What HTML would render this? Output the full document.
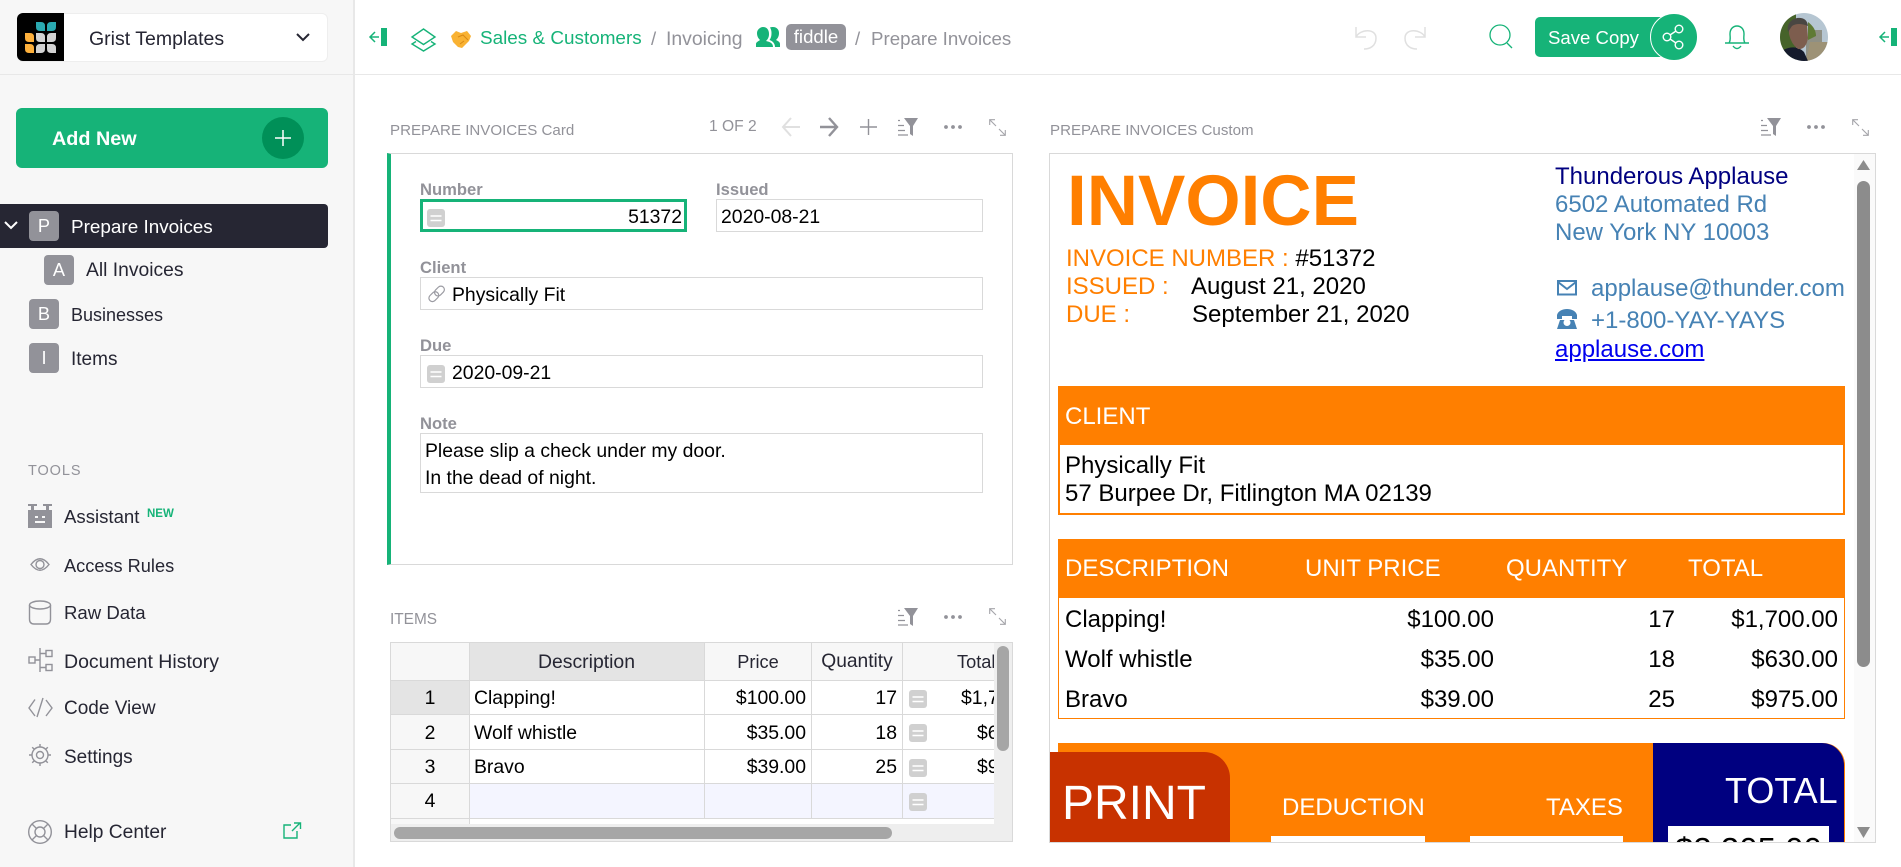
<!DOCTYPE html>
<html><head><meta charset="utf-8"><title>Grist Templates</title>
<style>
html,body{margin:0;padding:0;background:#fff}
#p{position:relative;width:1901px;height:867px;overflow:hidden;background:#fff;font-family:"Liberation Sans",Arial,sans-serif;color:#262633}
.t{position:absolute;white-space:nowrap;line-height:30px;height:30px;font-size:19.4px}
.b{position:absolute;box-sizing:border-box}
.g{color:#929299}.gr{color:#16b378}
.h{font-size:15.1px;color:#929299}
.l{font-size:16.6px;font-weight:bold;color:#929299}
.f{position:absolute;box-sizing:border-box;border:1px solid #d9d9d9;background:#fff}
.c{color:#000}
.i{font-size:24px;color:#000}
.o{color:#ff7f00}
.w{color:#fff}
.s{color:#4682b4}
svg{position:absolute;left:0;top:0}
</style></head><body><div id="p">

<!-- sidebar -->
<div class="b" style="left:0;top:0;width:353px;height:867px;background:#f7f7f7"></div>
<div class="b" style="left:353px;top:0;width:2px;height:867px;background:#e8e8e8"></div>
<div class="b" style="left:0;top:74px;width:1901px;height:1px;background:#e8e8e8"></div>
<div class="b" style="left:17px;top:13px;width:311px;height:49px;background:#fff;border:1px solid #eee;border-radius:6px"></div>
<div class="t" style="left:89px;top:24px;font-size:19.5px;color:#262633">Grist Templates</div>
<div class="b" style="left:16px;top:108px;width:312px;height:60px;background:#16b378;border-radius:6px"></div>
<div class="t w" style="left:52px;top:124px;font-size:19.8px;font-weight:bold">Add New</div>
<div class="b" style="left:0;top:204px;width:328px;height:44px;background:#262633;border-radius:0 4px 4px 0"></div>
<div class="b" style="left:29px;top:211px;width:30px;height:30px;background:#929299;border-radius:4px;color:#fff;text-align:center;line-height:30px;font-size:18.2px">P</div>
<div class="t w" style="left:71px;top:213px;font-size:18.9px">Prepare Invoices</div>
<div class="b" style="left:44px;top:255px;width:30px;height:30px;background:#929299;border-radius:4px;color:#fff;text-align:center;line-height:30px;font-size:18.2px">A</div>
<div class="t" style="left:86px;top:256px;font-size:19.3px">All Invoices</div>
<div class="b" style="left:29px;top:299px;width:30px;height:30px;background:#929299;border-radius:4px;color:#fff;text-align:center;line-height:30px;font-size:18.2px">B</div>
<div class="t" style="left:71px;top:300px;font-size:18px">Businesses</div>
<div class="b" style="left:29px;top:343px;width:30px;height:30px;background:#929299;border-radius:4px;color:#fff;text-align:center;line-height:30px;font-size:18.2px">I</div>
<div class="t" style="left:71px;top:345px;font-size:19px">Items</div>
<div class="t g" style="left:28px;top:456px;font-size:14.5px;letter-spacing:.9px">TOOLS</div>
<div class="t" style="left:64px;top:502px;font-size:18.6px">Assistant</div>
<div class="t gr" style="left:147px;top:499px;font-size:11.5px;font-weight:bold">NEW</div>
<div class="t" style="left:64px;top:551px;font-size:18.2px">Access Rules</div>
<div class="t" style="left:64px;top:598px;font-size:18.6px">Raw Data</div>
<div class="t" style="left:64px;top:647px;font-size:19.5px">Document History</div>
<div class="t" style="left:64px;top:694px;font-size:19px">Code View</div>
<div class="t" style="left:64px;top:743px;font-size:19px">Settings</div>
<div class="t" style="left:64px;top:818px;font-size:19.2px">Help Center</div>

<!-- top bar -->
<div class="t gr" style="left:480px;top:24px;font-size:18.9px">Sales &amp; Customers</div>
<div class="t g" style="left:651px;top:24px;font-size:18.6px">/</div>
<div class="t g" style="left:666px;top:24px;font-size:19.4px">Invoicing</div>
<div class="b" style="left:786px;top:24px;width:60px;height:26px;background:#929299;border-radius:5px;color:#fff;text-align:center;line-height:26px;font-size:18.6px">fiddle</div>
<div class="t g" style="left:855px;top:24px;font-size:18.6px">/</div>
<div class="t g" style="left:871px;top:24px;font-size:18.7px">Prepare Invoices</div>
<div class="b" style="left:1535px;top:17px;width:135px;height:40px;background:#16b378;border-radius:5px"></div>
<div class="t w" style="left:1548px;top:23px;font-size:18.6px">Save Copy</div>

<!-- card widget -->
<div class="t h" style="left:390px;top:116px">PREPARE INVOICES Card</div>
<div class="t h" style="left:709px;top:112px;color:#929299;font-size:15.6px">1 OF 2</div>
<div class="f" style="left:387px;top:153px;width:626px;height:412px;border-left:4px solid #16b378"></div>
<div class="t l" style="left:420px;top:175px">Number</div>
<div class="f" style="left:420px;top:199px;width:267px;height:33px;border:3px solid #16b378"></div>
<div class="t c" style="right:1219px;top:202px">51372</div>
<div class="t l" style="left:716px;top:175px">Issued</div>
<div class="f" style="left:716px;top:199px;width:267px;height:33px"></div>
<div class="t c" style="left:721px;top:202px">2020-08-21</div>
<div class="t l" style="left:420px;top:253px">Client</div>
<div class="f" style="left:420px;top:277px;width:563px;height:33px"></div>
<div class="t c" style="left:452px;top:280px">Physically Fit</div>
<div class="t l" style="left:420px;top:331px">Due</div>
<div class="f" style="left:420px;top:355px;width:563px;height:33px"></div>
<div class="t c" style="left:452px;top:358px">2020-09-21</div>
<div class="t l" style="left:420px;top:409px">Note</div>
<div class="f" style="left:420px;top:433px;width:563px;height:60px"></div>
<div class="t c" style="left:425px;top:436px">Please slip a check under my door.</div>
<div class="t c" style="left:425px;top:463px">In the dead of night.</div>

<!-- items grid -->
<div class="t h" style="left:390px;top:605px;font-size:15.4px">ITEMS</div>
<div class="b" style="left:390px;top:642px;width:623px;height:200px;background:#eee;border:1px solid #d9d9d9"></div>
<div class="b" style="left:391px;top:643px;width:603px;height:181px;overflow:hidden;background:#fff">
  <div class="b" style="left:0;top:0;width:78px;height:181px;background:#f7f7f7"></div>
  <div class="b" style="left:78px;top:0;width:525px;height:37px;background:#f7f7f7"></div>
  <div class="b" style="left:78px;top:0;width:235px;height:37px;background:#e4e4e4"></div>
  <div class="b" style="left:0;top:37px;width:78px;height:34px;background:#e4e4e4"></div>
  <div class="b" style="left:78px;top:141px;width:525px;height:34px;background:#f4f5ff"></div>
  <div class="b" style="left:0;top:37px;width:603px;height:1px;background:#d9d9d9"></div>
  <div class="b" style="left:0;top:71px;width:603px;height:1px;background:#d9d9d9"></div>
  <div class="b" style="left:0;top:106px;width:603px;height:1px;background:#d9d9d9"></div>
  <div class="b" style="left:0;top:140px;width:603px;height:1px;background:#d9d9d9"></div>
  <div class="b" style="left:0;top:175px;width:603px;height:1px;background:#d9d9d9"></div>
  <div class="b" style="left:78px;top:0;width:1px;height:181px;background:#d9d9d9"></div>
  <div class="b" style="left:313px;top:0;width:1px;height:175px;background:#d9d9d9"></div>
  <div class="b" style="left:420px;top:0;width:1px;height:175px;background:#d9d9d9"></div>
  <div class="b" style="left:511px;top:0;width:1px;height:175px;background:#d9d9d9"></div>
  <div class="t" style="left:78px;width:235px;text-align:center;top:4px">Description</div>
  <div class="t" style="left:314px;width:106px;text-align:center;top:4px;font-size:18.2px">Price</div>
  <div class="t" style="left:421px;width:90px;text-align:center;top:4px;font-size:19.2px">Quantity</div>
  <div class="t" style="left:566px;top:4px;font-size:18.2px">Total</div>
  <div class="t c" style="left:0;width:78px;text-align:center;top:40px">1</div>
  <div class="t c" style="left:0;width:78px;text-align:center;top:75px">2</div>
  <div class="t c" style="left:0;width:78px;text-align:center;top:109px">3</div>
  <div class="t c" style="left:0;width:78px;text-align:center;top:143px">4</div>
  <div class="t c" style="left:83px;top:40px">Clapping!</div>
  <div class="t c" style="left:83px;top:75px">Wolf whistle</div>
  <div class="t c" style="left:83px;top:109px">Bravo</div>
  <div class="t c" style="right:188px;top:40px">$100.00</div>
  <div class="t c" style="right:188px;top:75px">$35.00</div>
  <div class="t c" style="right:188px;top:109px">$39.00</div>
  <div class="t c" style="right:97px;top:40px">17</div>
  <div class="t c" style="right:97px;top:75px">18</div>
  <div class="t c" style="right:97px;top:109px">25</div>
  <div class="t c" style="left:570px;top:40px">$1,700.00</div>
  <div class="t c" style="left:586px;top:75px">$630.00</div>
  <div class="t c" style="left:586px;top:109px">$975.00</div>
</div>
<div class="b" style="left:997px;top:646px;width:12px;height:105px;background:#a6a6a6;border-radius:6px"></div>
<div class="b" style="left:394px;top:827px;width:498px;height:12px;background:#a6a6a6;border-radius:6px"></div>

<!-- custom widget -->
<div class="t h" style="left:1050px;top:116px">PREPARE INVOICES Custom</div>
<div class="b" style="left:1049px;top:153px;width:827px;height:690px;border:1px solid #d9d9d9;background:#fff"></div>
<div class="b" style="left:1050px;top:154px;width:825px;height:688px;overflow:hidden">
  <div class="b" style="right:0;top:0;width:21px;height:688px;background:#fafafa"></div>
  <div class="t" style="left:17px;top:8px;height:80px;line-height:80px;font-size:71px;font-weight:bold;color:#ff7f00">INVOICE</div>
  <div class="t i" style="left:16px;top:90px"><span class="o">INVOICE NUMBER : </span>#51372</div>
  <div class="t i o" style="left:16px;top:118px">ISSUED :</div>
  <div class="t i" style="left:141px;top:118px">August 21, 2020</div>
  <div class="t i o" style="left:16px;top:146px">DUE :</div>
  <div class="t i" style="left:142px;top:146px">September 21, 2020</div>
  <div class="t i" style="left:505px;top:8px;color:#000080">Thunderous Applause</div>
  <div class="t i s" style="left:505px;top:36px">6502 Automated Rd</div>
  <div class="t i s" style="left:505px;top:64px">New York NY 10003</div>
  <div class="t i s" style="left:541px;top:120px">applause@thunder.com</div>
  <div class="t i s" style="left:541px;top:152px">+1-800-YAY-YAYS</div>
  <div class="t i" style="left:505px;top:181px;color:#0000ee;text-decoration:underline">applause.com</div>

  <div class="b" style="left:8px;top:232px;width:787px;height:129px;border:2px solid #ff7f00"></div>
  <div class="b" style="left:8px;top:232px;width:787px;height:59px;background:#ff7f00"></div>
  <div class="t i w" style="left:15px;top:248px">CLIENT</div>
  <div class="t i" style="left:15px;top:297px">Physically Fit</div>
  <div class="t i" style="left:15px;top:325px">57 Burpee Dr, Fitlington MA 02139</div>

  <div class="b" style="left:8px;top:385px;width:787px;height:180px;border:1px solid #ff7f00"></div>
  <div class="b" style="left:8px;top:385px;width:787px;height:59px;background:#ff7f00"></div>
  <div class="t i w" style="left:15px;top:400px">DESCRIPTION</div>
  <div class="t i w" style="left:255px;top:400px">UNIT PRICE</div>
  <div class="t i w" style="left:456px;top:400px">QUANTITY</div>
  <div class="t i w" style="left:638px;top:400px">TOTAL</div>
  <div class="t i" style="left:15px;top:451px">Clapping!</div>
  <div class="t i" style="left:15px;top:491px">Wolf whistle</div>
  <div class="t i" style="left:15px;top:531px">Bravo</div>
  <div class="t i" style="right:381px;top:451px">$100.00</div>
  <div class="t i" style="right:381px;top:491px">$35.00</div>
  <div class="t i" style="right:381px;top:531px">$39.00</div>
  <div class="t i" style="right:200px;top:451px">17</div>
  <div class="t i" style="right:200px;top:491px">18</div>
  <div class="t i" style="right:200px;top:531px">25</div>
  <div class="t i" style="right:37px;top:451px">$1,700.00</div>
  <div class="t i" style="right:37px;top:491px">$630.00</div>
  <div class="t i" style="right:37px;top:531px">$975.00</div>

  <div class="b" style="left:8px;top:589px;width:787px;height:110px;background:#ff7f00;border-radius:0 22px 0 0"></div>
  <div class="b" style="left:603px;top:589px;width:191px;height:110px;background:#000080;border-radius:0 22px 0 0"></div>
  <div class="b" style="left:0;top:598px;width:180px;height:100px;background:#c83200;border-radius:0 26px 0 0"></div>
  <div class="t w" style="left:12px;top:630px;font-size:48px;height:40px;line-height:40px">PRINT</div>
  <div class="t i w" style="left:232px;top:639px">DEDUCTION</div>
  <div class="t i w" style="left:496px;top:639px">TAXES</div>
  <div class="t w" style="left:675px;top:617px;font-size:36px;height:40px;line-height:40px">TOTAL</div>
  <div class="b" style="left:221px;top:682px;width:154px;height:20px;background:#fff"></div>
  <div class="b" style="left:420px;top:682px;width:153px;height:20px;background:#fff"></div>
  <div class="b" style="left:618px;top:672px;width:161px;height:30px;background:#fff;overflow:hidden">
    <div class="t" style="left:7px;top:9px;font-size:33px;color:#000">$3,305.00</div>
  </div>
  <div class="b" style="left:807px;top:27px;width:13px;height:486px;background:#8c8c8c;border-radius:7px"></div>
</div>

<!-- icons -->
<svg width="1901" height="867" viewBox="0 0 1901 867" fill="none">
<defs>
 <g id="sf"><path d="M0 2.500H2M0 7.500H6M0 12.500H7M0 17H10" stroke="#929299" stroke-width="1.300"/><path d="M6 0H20L15 8V18L12 16V8Z" fill="#929299"/></g>
 <g id="dots" fill="#929299"><circle cx="2" cy="0" r="1.900"/><circle cx="9" cy="0" r="1.900"/><circle cx="16" cy="0" r="1.900"/></g>
 <g id="ex" stroke="#a5a5aa" stroke-width="1.100"><path d="M.7 6V.7H6M1 1L7 7M16.300 11V16.300H11M16 16L10 10"/></g>
 <g id="eq"><rect width="18" height="18" rx="3" fill="#d0d0d0"/><path d="M3.500 7H14.500M3.500 11.500H14.500" stroke="#fff" stroke-width="1.600"/></g>
</defs>
<!-- logo -->
<path d="M23 13H64V61H23A6 6 0 0 1 17 55V19A6 6 0 0 1 23 13Z" fill="#000"/>
<path d="M36 22H41Q45 22 45 26V31H40Q36 31 36 27ZM56 22H51Q47 22 47 26V31H52Q56 31 56 27Z" fill="#2aa9b0"/>
<path d="M36 33H41Q45 33 45 37V42H40Q36 42 36 38ZM56 33H51Q47 33 47 37V42H52Q56 42 56 38ZM36 53V48Q36 44 40 44H45V49Q45 53 41 53ZM56 53V48Q56 44 52 44H47V49Q47 53 51 53Z" fill="#d3d3d3"/>
<path d="M25 33H30Q34 33 34 37V42H29Q25 42 25 38ZM25 44H30Q34 44 34 48V53H29Q25 53 25 49Z" fill="#fdb03c"/>
<path d="M297 34L303 40L309 34" stroke="#262633" stroke-width="2"/>
<circle cx="283" cy="138" r="21" fill="#009058"/><path d="M283 130V146M275 138H291" stroke="#fff" stroke-width="1.500"/>
<path d="M5 222L11 228L17 222" stroke="#fff" stroke-width="2"/>
<!-- tools -->
<path d="M28 504H37V506H34V510H46V506H43V504H52V506H49V510H52V528H28V510H31V506H28Z" fill="#929299"/>
<path d="M35 516H38V518H35ZM42 516H45V518H42ZM35 521H45V523H35Z" fill="#f7f7f7"/>
<g stroke="#929299" stroke-width="1.400">
<path d="M31 564.500Q40 553 49 564.500Q40 576 31 564.500Z"/><circle cx="40" cy="564.500" r="4"/>
<ellipse cx="40" cy="605" rx="10.500" ry="4"/><path d="M29.500 605V619Q29.500 624 34 624H46Q50.500 624 50.500 619V605"/>
<rect x="29" y="657" width="6" height="6"/><rect x="46" y="650.500" width="6" height="6"/><rect x="46" y="664.500" width="6" height="6"/><path d="M40 648V672M35 660H40M40 653.500H46M40 667.500H46"/>
<path d="M35 699.500L29 708L35 716M43 698L37 717M46 700L52 708L46 716"/>
<circle cx="40" cy="755" r="8"/><circle cx="40" cy="755" r="3.500"/><path d="M40 744V747M40 763V766M29 755H32M48 755H51M32.200 747.200L34.300 749.300M45.700 760.700L47.800 762.800M47.800 747.200L45.700 749.300M34.300 760.700L32.200 762.800"/>
<circle cx="40" cy="832" r="11.300"/><circle cx="40" cy="832" r="5"/><path d="M32 824L36.500 828.500M48 824L43.500 828.500M32 840L36.500 835.500M48 840L43.500 835.500"/>
</g>
<path d="M291 825H284V838H297V831M292 831L300 823M294 823H300.500V829" stroke="#16b378" stroke-width="1.400"/>
<!-- top -->
<rect x="381" y="28" width="6" height="18" fill="#16b378"/><path d="M379 37H370M375 32L370 37L375 42" stroke="#16b378" stroke-width="1.500"/>
<path d="M423.500 29L435 37L423.500 44.500L412 37ZM416 41.500L412 44L423.500 51L435 44L431 41.500" stroke="#16b378" stroke-width="1.400"/>
<path d="M451 36L456 31L461 33L467 31L471 36L469 41L462 48L458 47L453 42Z" fill="#f9b233"/><path d="M458 37L463 35L468 40M460 44L464 41" stroke="#d98a14" stroke-width="1"/>
<path d="M763 27C767 27 769 30 769 34C769 37 768 39 766 41C770 42 773 43 773 47H756V44C756 42 759 41 760 40C758 38 757 36 757 33C757 30 760 27 763 27ZM773 27C777 27 779 30 779 33C779 36 778 38 776 40C778 41 780 42 780 44V47H775C775 44 773 41 769.500 40C771 38 771.500 36 771.500 33C771.500 31 771 29 770 27.500C771 27 772 27 773 27Z" fill="#16b378"/>
<path d="M1356 27V37H1366M1356 37C1360 29 1376 28 1376 38C1376 46 1370 49 1364 49" stroke="#e0e0e0" stroke-width="1.500"/>
<path d="M1425 27V37H1415M1425 37C1421 29 1405 28 1405 38C1405 46 1411 49 1417 49" stroke="#e0e0e0" stroke-width="1.500"/>
<circle cx="1500" cy="35" r="10" stroke="#16b378" stroke-width="1.300"/><path d="M1507 43L1512 48" stroke="#16b378" stroke-width="1.300"/>
<circle cx="1674" cy="37" r="23.500" fill="#16b378" stroke="#fff" stroke-width="1"/>
<g stroke="#fff" stroke-width="1.400"><circle cx="1679" cy="29" r="3.800"/><circle cx="1667" cy="37" r="3.800"/><circle cx="1679" cy="45" r="3.800"/><path d="M1670 35L1676 31M1670 39L1676 43"/></g>
<path d="M1725 43H1749M1729 43C1731 40 1730 37 1730 34C1730 29 1733 26 1737 26C1741 26 1744 29 1744 34C1744 37 1743 40 1745 43M1733 46Q1737 51 1741 46" stroke="#16b378" stroke-width="1.400"/>
<clipPath id="av"><circle cx="1804" cy="37" r="24"/></clipPath>
<g clip-path="url(#av)">
<rect x="1780" y="13" width="48" height="48" fill="#b6c6d2"/>
<rect x="1780" y="13" width="16" height="48" fill="#46632a"/>
<path d="M1812 30H1822V46H1828V61H1806V40Z" fill="#8f9085"/>
<path d="M1810 42H1828V61H1806Z" fill="#9d9276"/>
<path d="M1808 22Q1816 28 1816 36L1808 40Z" fill="#5f7a34"/>
<path d="M1783 50Q1796 44 1804 52L1808 61H1780V52Z" fill="#151b2c"/>
<path d="M1789 24Q1798 20 1807 24L1808 38Q1806 50 1798 49Q1791 44 1789 34Z" fill="#7d5d4e"/>
<path d="M1788 32Q1786 21 1797 18Q1807 17 1808 26Q1798 22 1792 26Z" fill="#494642"/>
</g>
<rect x="1891" y="28" width="6" height="18" fill="#16b378"/><path d="M1889 37H1880M1885 32L1880 37L1885 42" stroke="#16b378" stroke-width="1.500"/>
<!-- widget icons -->
<path d="M800 127H784M791 118L783 127L791 136" stroke="#e0e0e0" stroke-width="2"/>
<path d="M820 127H836M829 118L837 127L829 136" stroke="#929299" stroke-width="2.400"/>
<path d="M868.500 119V135M860 127H877" stroke="#929299" stroke-width="1.400"/>
<use href="#sf" x="898" y="118"/><use href="#dots" x="944" y="127"/><use href="#ex" x="989" y="119"/>
<use href="#sf" x="1761" y="118"/><use href="#dots" x="1807" y="127"/><use href="#ex" x="1852" y="119"/>
<use href="#sf" x="898" y="608"/><use href="#dots" x="944" y="617"/><use href="#ex" x="989" y="608"/>
<!-- field icons -->
<use href="#eq" x="427" y="209"/><use href="#eq" x="427" y="365"/>
<use href="#eq" x="909" y="690"/><use href="#eq" x="909" y="724"/><use href="#eq" x="909" y="759"/><use href="#eq" x="909" y="793"/>
<g stroke="#9c9ca3" stroke-width="1.200" transform="rotate(-45 437 293.500)"><rect x="427" y="290" width="11" height="7" rx="3.500"/><rect x="435" y="290" width="11" height="7" rx="3.500"/></g>
<!-- invoice icons -->
<rect x="1558" y="281" width="18" height="13.500" stroke="#4682b4" stroke-width="2"/><path d="M1558 282L1567 289L1576 282" stroke="#4682b4" stroke-width="2"/>
<path d="M1557 315C1559 307 1575 307 1577 315V319H1572V316H1562V319H1557ZM1560 320H1574L1577 329H1557Z" fill="#4682b4"/><circle cx="1567" cy="322.500" r="3.500" fill="#fff"/>
<!-- scroll arrows -->
<path d="M1863.500 160L1870 170H1857Z" fill="#8c8c8c"/><path d="M1857 827H1870L1863.500 838Z" fill="#8c8c8c"/>
</svg>
</div></body></html>
